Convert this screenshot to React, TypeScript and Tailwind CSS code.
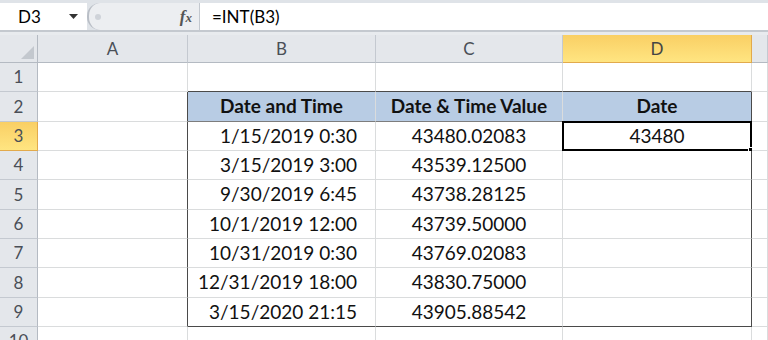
const cols = ["A", "B", "C", "D", "E"];

const rows: string[][] = [
  ["1/15/2019 0:30", "43480.02083", "43480"],
  ["3/15/2019 3:00", "43539.12500", ""],
  ["9/30/2019 6:45", "43738.28125", ""],
  ["10/1/2019 12:00", "43739.50000", ""],
  ["10/31/2019 0:30", "43769.02083", ""],
  ["12/31/2019 18:00", "43830.75000", ""],
  ["3/15/2020 21:15", "43905.88542", ""],
];

const FormulaBar = () => (
  <div className="bg-[#dfe3e8]">
    <div className="h-[3px]" />
    <div className="flex h-[27px] items-stretch">
      <div className="flex w-[87px] items-center justify-between bg-white pl-[18px] pr-[9px] text-[17px] text-black">
        <span>D3</span>
        <svg width="9" height="5" viewBox="0 0 9 5">
          <path d="M0 0 H9 L4.5 5 Z" fill="#333" />
        </svg>
      </div>
      <div className="flex w-[112px] items-center justify-between rounded-l-[13px] border-l-2 border-[#b9bec6] bg-[#eceef1] pl-[6px] pr-[7px]">
        <span className="h-[6px] w-[6px] rounded-full bg-[#cfd3d9]" />
        <span className="font-['Liberation_Serif',serif] text-[17px] font-bold italic text-[#555]">
          f<span className="text-[13px]">x</span>
        </span>
      </div>
      <div className="flex flex-1 items-center border-l border-[#c3c8cf] bg-white pl-[12px] text-[17px] text-black">
        =INT(B3)
      </div>
    </div>
    <div className="h-[5px] border-t-2 border-[#c4c9cf] bg-[#e8ebee]" />
  </div>
);

const cellClass = (r: number, c: number) => {
  const inTable = r >= 2 && r <= 9;
  const tCol = c >= 1 && c <= 3;
  let right = "border-r-[#dadcdd]";
  let bottom = "border-b-[#dadcdd]";
  if (inTable && (c === 0 || c === 3)) right = "border-r-[#4a4a4a]";
  if (r === 1 && tCol) bottom = "border-b-[#4a4a4a]";
  if (r === 2 && tCol) bottom = "border-b-[#7d7d7d]";
  if (r === 9 && tCol) bottom = "border-b-[#4a4a4a]";
  const bg = r === 2 && tCol ? "bg-[#b8cce4] font-bold" : "bg-white";
  return `relative flex items-center border-r border-b ${right} ${bottom} ${bg}`;
};

const cellContent = (r: number, c: number) => {
  if (r === 2) {
    if (c === 1) return "Date and Time";
    if (c === 2) return "Date & Time Value";
    if (c === 3) return "Date";
  }
  if (r >= 3 && r <= 9) {
    const d = rows[r - 3];
    if (c === 1) return d[0];
    if (c === 2) return d[1];
    if (c === 3) return d[2];
  }
  return "";
};

export default function App() {
  const sheetRows = [1, 2, 3, 4, 5, 6, 7, 8, 9, 10];
  return (
    <div className="h-[340px] w-[768px] overflow-hidden bg-white font-['Lato',sans-serif]">
      <FormulaBar />
      <div className="grid grid-cols-[38px_150px_188px_187px_189px_1fr] grid-rows-[28px_repeat(10,29.33px)]">
        <div className="flex items-end justify-end border-r border-b border-r-[#b4bac2] border-b-[#b4bac2] bg-[#e4e7eb] p-[3px]">
          <svg width="13" height="13" viewBox="0 0 13 13">
            <path d="M13 0 V13 H0 Z" fill="#c3c8ce" />
          </svg>
        </div>
        {cols.map((col) =>
          col === "D" ? (
            <div
              key={col}
              className="flex items-center justify-center border-r border-b border-[#e2aa4c] bg-gradient-to-b from-[#f9cf64] to-[#ffe581] text-[17px] text-[#444]"
            >
              {col}
            </div>
          ) : (
            <div
              key={col}
              className="flex items-center justify-center border-r border-b border-r-[#c4c9d0] border-b-[#b4bac2] bg-[#e4e7eb] text-[17px] text-[#4a4f57]"
            >
              {col === "E" ? "" : col}
            </div>
          )
        )}
        {sheetRows.map((r) => (
          <div key={r} className="contents">
            {r === 3 ? (
              <div className="flex items-center justify-center border-r border-b border-[#e2aa4c] bg-gradient-to-b from-[#f9cf64] to-[#ffe581] text-[17px] text-[#4a4f57]">
                {r}
              </div>
            ) : (
              <div className="flex items-center justify-center border-r border-b border-r-[#b4bac2] border-b-[#c4c9d0] bg-[#e4e7eb] text-[17px] text-[#4a4f57]">
                {r}
              </div>
            )}
            {cols.map((col, c) => {
              const text = cellContent(r, c);
              const align =
                r === 2 || c !== 1 ? "justify-center" : "justify-end pr-[18px]";
              return (
                <div key={col} className={`${cellClass(r, c)} ${align} text-[19px] text-[#111]`}>
                  {text}
                  {r === 3 && c === 3 && (
                    <div className="absolute -top-[1px] -left-[1px] -right-[1px] -bottom-[1px] border-2 border-black">
                      <div className="absolute -right-[4px] -bottom-[4px] h-[6px] w-[6px] border border-white bg-black" />
                    </div>
                  )}
                </div>
              );
            })}
          </div>
        ))}
      </div>
    </div>
  );
}
